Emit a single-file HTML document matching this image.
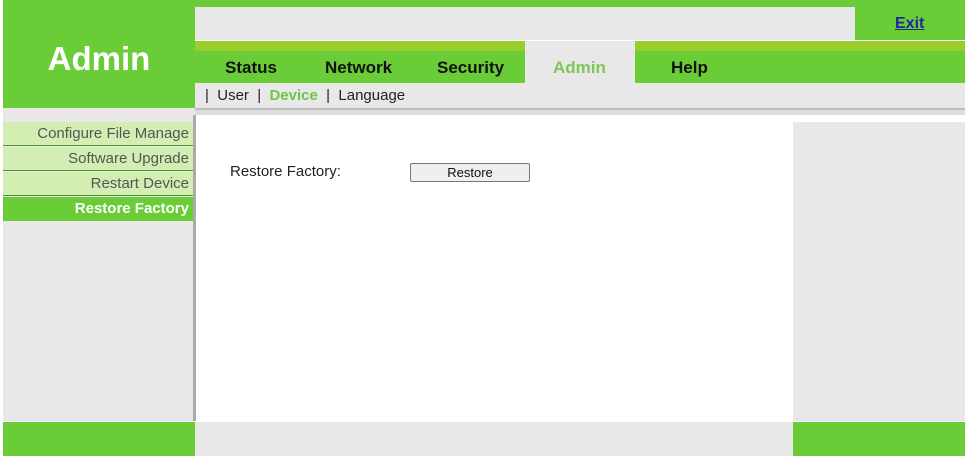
<!DOCTYPE html>
<html><head><style>
body{margin:0;width:968px;height:456px;background:#fff;position:relative;overflow:hidden;font-family:"Liberation Sans",sans-serif}
div{position:absolute;box-sizing:border-box}
.g{background:#6acd37}.gr{background:#e8e8e8}
.nav{top:58px;font-weight:bold;font-size:17px;color:#111}
.m{left:3px;width:190px;height:24px;background:#d3eeb3;border-bottom:1px solid #4a9a2a;text-align:right;padding-right:4px;font-size:15px;color:#555;line-height:24px}
</style></head><body>
<div class="g" style="left:3px;top:0;width:962px;height:7px"></div>
<div class="g" style="left:3px;top:0;width:192px;height:108px"></div>
<div style="left:3px;top:40px;width:192px;text-align:center;color:#fff;font-weight:bold;font-size:33px">Admin</div>
<div class="gr" style="left:195px;top:7px;width:660px;height:33px"></div>
<div class="g" style="left:855px;top:7px;width:110px;height:33px"></div>
<div style="left:895px;top:15px;font-weight:bold;font-size:16px;color:#1a2a9a;text-decoration:underline">Exit</div>
<div style="left:195px;top:41px;width:770px;height:10px;background:#9acd2a"></div>
<div class="g" style="left:195px;top:51px;width:770px;height:32px"></div>
<div style="left:525px;top:41px;width:110px;height:42px;background:#e8e8e8"></div>
<div class="nav" style="left:225px">Status</div>
<div class="nav" style="left:325px">Network</div>
<div class="nav" style="left:437px">Security</div>
<div class="nav" style="left:553px;color:#7cc858">Admin</div>
<div class="nav" style="left:671px">Help</div>
<div class="gr" style="left:195px;top:83px;width:770px;height:25px"></div>
<div style="left:205px;top:87px;font-size:15px;color:#222;white-space:pre">|  User  |  <b style="color:#6ac846">Device</b>  |  Language</div>
<div style="left:195px;top:108px;width:770px;height:7px;background:#ddd;border-top:2px solid #bbb"></div>
<div class="gr" style="left:3px;top:108px;width:192px;height:313px"></div>
<div style="left:193px;top:115px;width:3px;height:306px;background:#aaa"></div>
<div style="left:196px;top:115px;width:597px;height:306px;background:#fff"></div>
<div class="gr" style="left:793px;top:122px;width:172px;height:299px"></div>
<div class="m" style="top:122px">Configure File Manage</div>
<div class="m" style="top:147px">Software Upgrade</div>
<div class="m" style="top:172px">Restart Device</div>
<div class="m" style="top:197px;background:#6acd37;color:#fff;font-weight:bold;border:none">Restore Factory</div>
<div style="left:230px;top:163px;font-size:15px;color:#222">Restore Factory:</div>
<div style="left:410px;top:163px;width:120px;height:19px;border:1px solid #777;border-radius:2px;background:#efefef;font-size:13px;text-align:center;line-height:17px;color:#111">Restore</div>
<div class="g" style="left:3px;top:422px;width:192px;height:34px"></div>
<div class="gr" style="left:195px;top:422px;width:598px;height:34px"></div>
<div class="g" style="left:793px;top:422px;width:172px;height:34px"></div>
</body></html>
